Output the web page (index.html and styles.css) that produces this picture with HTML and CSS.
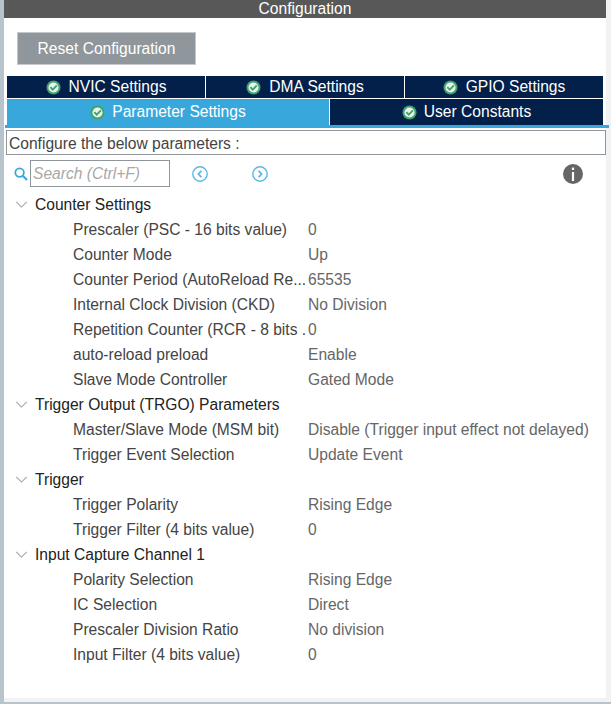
FILE: index.html
```html
<!DOCTYPE html>
<html lang="en">
    <head>
        <meta charset="UTF-8">
        <title>Configuration</title>
        <link rel="stylesheet" href="styles.css">
    </head>
    <body>
        <svg class="defs" width="0" height="0">
            <symbol id="check" viewBox="0 0 16 16">
                <circle cx="8" cy="8" r="7.5" fill="#3fa36c"/>
                <circle cx="8" cy="8" r="5.4" fill="#e8f3ee"/>
                <path d="M4.6 7.6 7.2 10.4 11.6 5.8" fill="none" stroke="#3fa36c" stroke-width="2"/>
            </symbol>
            <symbol id="chevron" viewBox="0 0 14 8">
                <path d="M1 1 7 7 13 1" fill="none" stroke="#a0a5a9" stroke-width="1.2"/>
            </symbol>
        </svg>

        <div class="panel">
            <div class="title">Configuration</div>

            <div class="reset-row">
                <button class="reset-button">Reset Configuration</button>
            </div>

            <div class="tabs">
                <div class="tab-row tab-row-top">
                    <div class="tab"><svg class="check"><use href="#check"/></svg>NVIC Settings</div>
                    <div class="tab"><svg class="check"><use href="#check"/></svg>DMA Settings</div>
                    <div class="tab"><svg class="check"><use href="#check"/></svg>GPIO Settings</div>
                </div>
                <div class="tab-row tab-row-bottom">
                    <div class="tab active"><svg class="check"><use href="#check"/></svg>Parameter Settings</div>
                    <div class="tab"><svg class="check"><use href="#check"/></svg>User Constants</div>
                </div>
            </div>

            <div class="hint">Configure the below parameters :</div>

            <div class="toolbar">
                <svg class="search-icon" viewBox="0 0 14 14">
                    <circle cx="5.6" cy="5.6" r="4.3" fill="none" stroke="#3ba7dc" stroke-width="1.8"/>
                    <path d="M8.8 8.8 13 13" stroke="#3ba7dc" stroke-width="2.2"/>
                </svg>
                <div class="search-box">Search (Ctrl+F)</div>
                <svg class="nav-icon nav-prev" viewBox="0 0 16 16">
                    <circle cx="8" cy="8" r="7.2" fill="none" stroke="#5cb8e6" stroke-width="1.4"/>
                    <path d="M9.4 4.8 6.4 8 9.4 11.2" fill="none" stroke="#5cb8e6" stroke-width="1.8"/>
                </svg>
                <svg class="nav-icon nav-next" viewBox="0 0 16 16">
                    <circle cx="8" cy="8" r="7.2" fill="none" stroke="#5cb8e6" stroke-width="1.4"/>
                    <path d="M6.6 4.8 9.6 8 6.6 11.2" fill="none" stroke="#5cb8e6" stroke-width="1.8"/>
                </svg>
                <svg class="info-icon" viewBox="0 0 20 20">
                    <circle cx="10" cy="10" r="10" fill="#666666"/>
                    <rect x="8.9" y="8" width="2.2" height="9" fill="#ffffff"/>
                    <rect x="8.9" y="3.6" width="2.2" height="2.4" fill="#ffffff"/>
                </svg>
            </div>

            <div class="params">
                <div class="section"><svg class="chevron"><use href="#chevron"/></svg>Counter Settings</div>
                <div class="row"><span class="name">Prescaler (PSC - 16 bits value)</span><span class="value">0</span></div>
                <div class="row"><span class="name">Counter Mode</span><span class="value">Up</span></div>
                <div class="row"><span class="name">Counter Period (AutoReload Re...</span><span class="value">65535</span></div>
                <div class="row"><span class="name">Internal Clock Division (CKD)</span><span class="value">No Division</span></div>
                <div class="row"><span class="name">Repetition Counter (RCR - 8 bits .</span><span class="value">0</span></div>
                <div class="row"><span class="name">auto-reload preload</span><span class="value">Enable</span></div>
                <div class="row"><span class="name">Slave Mode Controller</span><span class="value">Gated Mode</span></div>

                <div class="section"><svg class="chevron"><use href="#chevron"/></svg>Trigger Output (TRGO) Parameters</div>
                <div class="row"><span class="name">Master/Slave Mode (MSM bit)</span><span class="value">Disable (Trigger input effect not delayed)</span></div>
                <div class="row"><span class="name">Trigger Event Selection</span><span class="value">Update Event</span></div>

                <div class="section"><svg class="chevron"><use href="#chevron"/></svg>Trigger</div>
                <div class="row"><span class="name">Trigger Polarity</span><span class="value">Rising Edge</span></div>
                <div class="row"><span class="name">Trigger Filter (4 bits value)</span><span class="value">0</span></div>

                <div class="section"><svg class="chevron"><use href="#chevron"/></svg>Input Capture Channel 1</div>
                <div class="row"><span class="name">Polarity Selection</span><span class="value">Rising Edge</span></div>
                <div class="row"><span class="name">IC Selection</span><span class="value">Direct</span></div>
                <div class="row"><span class="name">Prescaler Division Ratio</span><span class="value">No division</span></div>
                <div class="row"><span class="name">Input Filter (4 bits value)</span><span class="value">0</span></div>
            </div>
        </div>
    </body>
</html>
```

FILE: styles.css
```css
html, body {
    margin: 0;
    height: 704px;
    overflow: hidden;
}

body {
    background-color: #b8c4cc;
    font-family: "Liberation Sans", Arial, sans-serif;
    font-size: 15.6px;
    padding: 0 0 2px 4px;
    box-sizing: border-box;
}

.defs {
    position: absolute;
}

.panel {
    height: 702px;
    box-sizing: border-box;
    background-color: #ffffff;
    border-right: 5px solid #f0f2f4;
    border-bottom: 4px solid #f0f2f4;
}

.title {
    height: 18px;
    line-height: 17px;
    background-color: #585858;
    color: #ffffff;
    text-align: center;
}

.reset-row {
    padding: 14px 0 0 13px;
}

.reset-button {
    display: block;
    width: 179px;
    height: 33px;
    padding: 1px 0 0;
    background-color: #90979c;
    border: 1px solid #c4c8cb;
    color: #ffffff;
    font-family: inherit;
    font-size: 15.6px;
}

.tabs {
    margin: 11px 0 0 3px;
    padding-bottom: 3px;
    width: 596px;
    position: relative;
}

.tabs::after {
    content: "";
    position: absolute;
    left: -2px;
    right: -6px;
    bottom: 0;
    height: 3px;
    background-color: #38a8dc;
}

.tab-row {
    display: flex;
    gap: 1px;
}

.tab-row-top {
    height: 22px;
    margin-bottom: 1px;
}

.tab-row-top .tab {
    gap: 8px;
}

.tab-row-bottom {
    height: 26px;
}

.tab {
    flex: 1;
    display: flex;
    align-items: center;
    justify-content: center;
    gap: 7px;
    background-color: #022049;
    color: #ffffff;
}

.tab.active {
    flex: none;
    width: 322px;
    background-color: #38a8dc;
}

.check {
    width: 15px;
    height: 15px;
}

.hint {
    margin: 2px 0 0 2px;
    width: 600px;
    height: 25px;
    box-sizing: border-box;
    border: 1px solid #90979c;
    line-height: 25px;
    padding-left: 2px;
    color: #444444;
}

.toolbar {
    display: flex;
    align-items: center;
    height: 27px;
    margin-top: 5px;
    padding-left: 10px;
}

.search-icon {
    width: 14px;
    height: 14px;
    margin-right: 2px;
}

.search-box {
    width: 140px;
    height: 27px;
    box-sizing: border-box;
    border: 1px solid #90979c;
    line-height: 26px;
    padding-left: 2px;
    color: #a8a8a8;
    font-style: italic;
}

.nav-icon {
    width: 16px;
    height: 16px;
}

.nav-prev {
    margin-left: 22px;
}

.nav-next {
    margin-left: 44px;
}

.info-icon {
    width: 20px;
    height: 20px;
    margin-left: auto;
    margin-right: 23px;
}

.params {
    margin-top: 5px;
}

.section {
    display: flex;
    align-items: center;
    height: 25px;
    color: #222222;
    padding-left: 11px;
}

.chevron {
    width: 13px;
    height: 7px;
    margin-right: 7px;
}

.row {
    display: grid;
    grid-template-columns: 235px 1fr;
    height: 25px;
    line-height: 25px;
    padding-left: 69px;
    color: #444444;
    white-space: nowrap;
}

.value {
    color: #666666;
}
```
